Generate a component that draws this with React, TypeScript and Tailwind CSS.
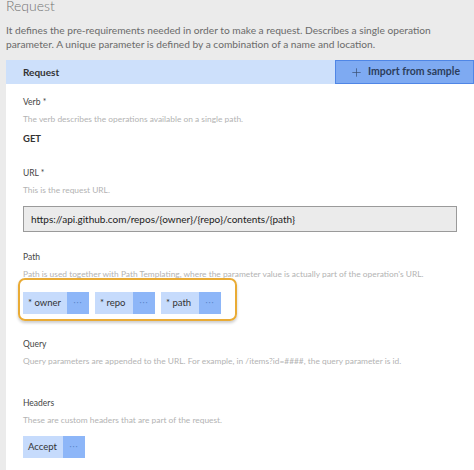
import { Plus } from 'lucide-react'

function Chip({ label, width }: { label: string; width: string }) {
  return (
    <div className={`flex h-[22px] ${width}`}>
      <span className="flex flex-1 items-center whitespace-nowrap bg-[#c6dbfc] pl-[5px] text-[9.5px] text-[#333]">{label}</span>
      <span className="flex w-[22px] items-center justify-center bg-[#8db6f8] pb-[2px] text-[8px] tracking-[1px] text-[#5a84c9]">···</span>
    </div>
  )
}

function Field({ label, hint }: { label: string; hint: string }) {
  return (
    <div>
      <p className="text-[8.5px] leading-[12px] text-[#444]">{label}</p>
      <p className="mt-[5px] whitespace-nowrap text-[8.4px] leading-[12px] text-[#b3b3b3]">{hint}</p>
    </div>
  )
}

export default function App() {
  return (
    <div className="h-[470px] w-[474px] overflow-hidden bg-[#ebebeb] pl-[6px] font-['Lato',sans-serif]">
      <h1 className="-mt-[2px] text-[14px] font-light leading-[16px] text-[#737373]">Request</h1>
      <p className="mt-[9px] w-[432px] text-[10.2px] leading-[14px] text-[#6a6a6a]">
        It defines the pre-requirements needed in order to make a request. Describes a single operation parameter. A unique parameter is defined by a combination of a name and location.
      </p>

      <div className="mt-[9px] h-[420px] bg-white">
        <div className="flex h-[24px] items-stretch bg-[#cde0fb]">
          <span className="flex flex-1 items-center pl-[17px] text-[10px] font-bold text-[#333]">Request</span>
          <button className="flex w-[139px] items-center gap-[5px] whitespace-nowrap border border-[#4f86e6] bg-[#7eaaf2] pl-[14px] text-[10.5px] font-bold text-[#2c3e5c]">
            <Plus className="h-[13px] w-[13px] text-[#3b4f70]" strokeWidth={1.3} />
            Import from sample
          </button>
        </div>

        <div className="px-[17px] pt-[12px]">
          <Field label="Verb *" hint="The verb describes the operations available on a single path." />
          <p className="mt-[7px] text-[9.5px] font-bold leading-[14px] text-[#333]">GET</p>

          <div className="mt-[21px]">
            <Field label="URL *" hint="This is the request URL." />
          </div>
          <div className="mt-[10px] flex h-[26px] w-[434px] items-center border border-[#9a9a9a] bg-[#ebebeb] pl-[7px] text-[10px] text-[#222]">
            https://api.github.com/repos/{'{owner}'}/{'{repo}'}/contents/{'{path}'}
          </div>

          <div className="mt-[19px]">
            <Field label="Path" hint="Path is used together with Path Templating, where the parameter value is actually part of the operation's URL." />
          </div>
          <div className="-ml-[5px] -mt-[2px] flex w-[219px] gap-[6px] rounded-[7px] border-2 border-[#e9ab35] pb-[5px] pl-[3px] pt-[12px] shadow-[0_2px_3px_rgba(0,0,0,0.2)]">
            <Chip label="* owner" width="w-[66px]" />
            <Chip label="* repo" width="w-[60px]" />
            <Chip label="* path" width="w-[60px]" />
          </div>

          <div className="mt-[17px]">
            <Field label="Query" hint="Query parameters are appended to the URL. For example, in /items?id=####, the query parameter is id." />
          </div>

          <div className="mt-[30px]">
            <Field label="Headers" hint="These are custom headers that are part of the request." />
          </div>
          <div className="mt-[10px]">
            <Chip label="Accept" width="w-[62px]" />
          </div>
        </div>
      </div>
    </div>
  )
}
